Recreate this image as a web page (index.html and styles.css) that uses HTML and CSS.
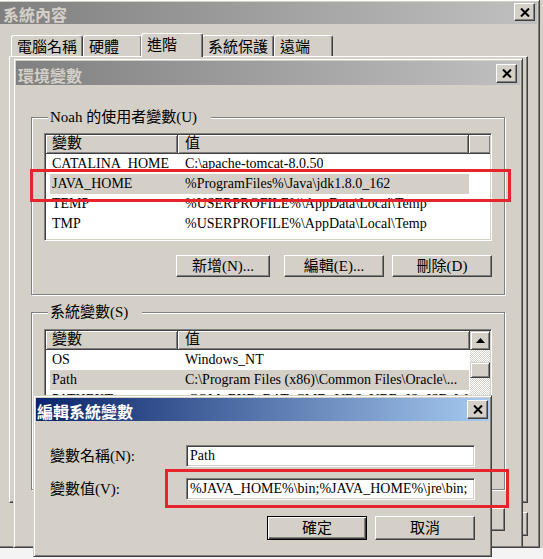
FILE: index.html
```html
<!DOCTYPE html>
<html lang="zh-Hant">
<head>
<meta charset="utf-8">
<title>環境變數</title>
<link rel="stylesheet" href="styles.css">
</head>
<body>
<div class="desktop">
  <div class="backwin"></div>

  <div class="win win-outer">
    <div class="titlebar inactive">
      <span class="title-text">系統內容</span>
      <span class="closebtn"><svg width="10" height="9" viewBox="0 0 10 9"><path d="M1 0.5 L9 8.5 M9 0.5 L1 8.5" stroke="#000" stroke-width="2"/></svg></span>
    </div>
    <div class="outer-body">
      <div class="tabs">
        <div class="tab">電腦名稱</div>
        <div class="tab">硬體</div>
        <div class="tab active">進階</div>
        <div class="tab">系統保護</div>
        <div class="tab">遠端</div>
      </div>
      <div class="tabpanel"></div>
      <div class="footer-buttons">
        <span class="btn w75"></span>
        <span class="btn w75"></span>
        <span class="btn w75"></span>
      </div>
    </div>
  </div>

  <div class="win win-env">
    <div class="titlebar tall inactive">
      <span class="title-text">環境變數</span>
      <span class="closebtn tallbtn"><svg width="10" height="9" viewBox="0 0 10 9"><path d="M1 0.5 L9 8.5 M9 0.5 L1 8.5" stroke="#000" stroke-width="2"/></svg></span>
    </div>
    <div class="env-body">
      <fieldset class="group">
        <legend>Noah 的使用者變數(U)</legend>
        <div class="listbox">
          <div class="lhead">
            <span class="hcell c1">變數</span>
            <span class="hcell c2">值</span>
            <span class="hcell c3"></span>
          </div>
          <div class="row"><span class="name">CATALINA_HOME</span><span class="val">C:\apache-tomcat-8.0.50</span></div>
          <div class="row sel"><span class="name">JAVA_HOME</span><span class="val">%ProgramFiles%\Java\jdk1.8.0_162</span></div>
          <div class="row"><span class="name">TEMP</span><span class="val">%USERPROFILE%\AppData\Local\Temp</span></div>
          <div class="row"><span class="name">TMP</span><span class="val">%USERPROFILE%\AppData\Local\Temp</span></div>
        </div>
        <div class="btnrow">
          <span class="btn b-new">新增(N)...</span>
          <span class="btn w100">編輯(E)...</span>
          <span class="btn w100">刪除(D)</span>
        </div>
      </fieldset>

      <fieldset class="group group2">
        <legend>系統變數(S)</legend>
        <div class="listbox withscroll">
          <div class="lcontent">
            <div class="lhead">
              <span class="hcell c1">變數</span>
              <span class="hcell c2 wide">值</span>
            </div>
            <div class="row"><span class="name">OS</span><span class="val">Windows_NT</span></div>
            <div class="row sel"><span class="name">Path</span><span class="val">C:\Program Files (x86)\Common Files\Oracle\...</span></div>
            <div class="row"><span class="name">PATHEXT</span><span class="val">.COM;.EXE;.BAT;.CMD;.VBS;.VBE;.JS;.JSE;.WSF;.WSH;.MSC</span></div>
          </div>
          <div class="vscroll">
            <span class="sbtn"><svg width="9" height="5" viewBox="0 0 9 5"><path d="M4.5 0 L9 5 L0 5Z" fill="#000"/></svg></span>
            <span class="thumb"></span>
          </div>
        </div>
        <div class="btnrow">
          <span class="btn b-new"></span>
          <span class="btn w100"></span>
          <span class="btn w100"></span>
        </div>
      </fieldset>

      <div class="env-buttons">
        <span class="btn w100"></span>
        <span class="btn w100"></span>
      </div>
    </div>
  </div>

  <div class="win win-edit">
    <div class="titlebar edit-title active-title">
      <span class="title-text">編輯系統變數</span>
      <span class="closebtn tallbtn"><svg width="10" height="9" viewBox="0 0 10 9"><path d="M1 0.5 L9 8.5 M9 0.5 L1 8.5" stroke="#000" stroke-width="2"/></svg></span>
    </div>
    <div class="edit-body">
      <div class="form">
        <span class="flabel">變數名稱(N):</span>
        <span class="input">Path</span>
        <span class="flabel">變數值(V):</span>
        <span class="input">%JAVA_HOME%\bin;%JAVA_HOME%\jre\bin;</span>
      </div>
      <div class="edit-buttons">
        <span class="btn default w100 h24">確定</span>
        <span class="btn w100 h24">取消</span>
      </div>
    </div>
  </div>

  <div class="mark mark-user"></div>
  <div class="mark mark-value"></div>
</div>
</body>
</html>
```

FILE: styles.css
```css
* { box-sizing: border-box; }

html, body {
  margin: 0;
  padding: 0;
}

body {
  width: 543px;
  height: 559px;
  overflow: hidden;
  background: #f4f4f4;
  font-family: "Liberation Serif", "Noto Sans CJK TC", serif;
  font-size: 15px;
  color: #000;
}

.desktop {
  position: relative;
  width: 543px;
  height: 559px;
  overflow: hidden;
}

.backwin {
  position: absolute;
  left: 539px;
  top: 0;
  width: 12px;
  height: 548px;
  background: #d4d0c8;
}

/* generic classic window */
.win {
  position: absolute;
  display: flex;
  flex-direction: column;
  background: #d4d0c8;
  border: 1px solid;
  border-color: #d4d0c8 #404040 #404040 #d4d0c8;
  box-shadow: inset 1px 1px #fff, inset -1px -1px #808080;
  padding: 2px;
}

.win-outer { left: -3px; top: -1px; width: 543px; height: 549px; }
.win-env { left: 13px; top: 58px; width: 510px; height: 490px; }
.win-edit { left: 33px; top: 395px; width: 459px; height: 162px; }

.titlebar {
  flex: none;
  height: 22px;
  display: flex;
  align-items: flex-start;
  justify-content: space-between;
  padding: 1px 2px 0 3px;
}

.titlebar.tall { height: 24px; padding: 3px 3px 0 2px; }
.titlebar.edit-title { height: 23px; padding: 2px 1px 0 1px; }

.inactive {
  background: linear-gradient(to right, #808080, #c0c0c0);
  color: #d4d0c8;
}

.active-title {
  background: linear-gradient(to right, #0a246a, #a6caf0);
  color: #fff;
}

.title-text {
  align-self: center;
  font-family: "Noto Sans CJK TC", sans-serif;
  font-weight: bold;
  font-size: 16px;
  line-height: 20px;
  white-space: nowrap;
}

.closebtn {
  width: 21px;
  height: 18px;
  display: flex;
  align-items: center;
  justify-content: center;
  background: #d4d0c8;
  border: 1px solid;
  border-color: #fff #404040 #404040 #fff;
  box-shadow: inset -1px -1px #808080;
}

.closebtn.tallbtn { height: 19px; }

/* outer window */
.outer-body {
  flex: 1;
  display: flex;
  flex-direction: column;
  padding: 9px 9px 0;
}

.tabs {
  height: 23px;
  display: flex;
  align-items: flex-end;
  padding-left: 2px;
}

.tab {
  position: relative;
  height: 21px;
  min-width: 59px;
  padding: 0 5px;
  border: 1px solid;
  border-bottom: none;
  border-color: #fff #404040 transparent #fff;
  border-radius: 3px 3px 0 0;
  box-shadow: inset -1px 0 #808080;
  font-family: "Noto Sans CJK TC", sans-serif;
  font-size: 15px;
  line-height: 20px;
  white-space: nowrap;
  background: #d4d0c8;
}

.tab.active {
  height: 24px;
  min-width: 62px;
  margin: 0 -1px -1px;
  z-index: 1;
}

.tabpanel {
  height: 447px;
  border: 1px solid;
  border-color: #fff #404040 #404040 #fff;
  box-shadow: inset -1px -1px #808080;
}

.footer-buttons {
  display: flex;
  justify-content: flex-end;
  gap: 6px;
  margin-top: 9px;
}

/* buttons */
.btn {
  height: 22px;
  display: flex;
  align-items: center;
  justify-content: center;
  background: #d4d0c8;
  border: 1px solid;
  border-color: #fff #404040 #404040 #fff;
  box-shadow: inset -1px -1px #808080;
  font-size: 15px;
  line-height: 20px;
  white-space: nowrap;
}

.btn.default {
  border-color: #000;
  box-shadow: inset 1px 1px #fff, inset -1px -1px #404040, inset -2px -2px #808080;
}

.w75 { width: 75px; height: 24px; }
.w100 { width: 100px; }
.h24 { height: 24px; }
.b-new { width: 94px; margin-right: 6px; }

/* env window body */
.env-body {
  flex: 1;
  display: flex;
  flex-direction: column;
  padding: 24px 15px 0;
}

.group {
  margin: 0;
  min-width: 0;
  padding: 7px 12px 17px;
  border: 1px solid #808080;
  box-shadow: inset 1px 1px #fff, 1px 1px #fff;
}

.group2 {
  margin-top: 9px;
  padding-top: 8px;
  padding-bottom: 16px;
}

.group legend {
  margin-left: 4px;
  padding: 0 14px 0 2px;
  background: #d4d0c8;
  font-size: 15px;
  line-height: 17px;
  white-space: nowrap;
}

.listbox {
  height: 108px;
  display: flex;
  flex-direction: column;
  overflow: hidden;
  background: #fff;
  border: 1px solid;
  border-color: #808080 #fff #fff #808080;
  box-shadow: inset 1px 1px #404040, inset -1px -1px #d4d0c8;
  padding: 1px;
}

.listbox.withscroll {
  display: grid;
  grid-template-columns: 1fr 20px;
}

.lcontent {
  overflow: hidden;
}

.lhead {
  display: flex;
  height: 19px;
  flex: none;
}

.hcell {
  height: 19px;
  background: #d4d0c8;
  border-right: 1px solid #404040;
  border-bottom: 1px solid #404040;
  box-shadow: inset 1px 1px #fff, inset -1px -1px #808080;
  font-size: 15px;
  line-height: 17px;
  white-space: nowrap;
}

.hcell.c1 { width: 132px; padding-left: 6px; }
.hcell.c2 { width: 291px; padding-left: 7px; }
.hcell.c2.wide { width: 292px; }
.hcell.c3 { flex: 1; border-right: none; }

.row {
  display: flex;
  height: 20px;
  width: 419px;
  margin-left: 4px;
  font-size: 14px;
  line-height: 20px;
  white-space: nowrap;
  overflow: hidden;
}

.row.sel { background: #d4d0c8; }

.row .name { width: 128px; flex: none; padding-left: 2px; overflow: hidden; }
.row .val { padding-left: 7px; overflow: hidden; }

.vscroll {
  display: flex;
  flex-direction: column;
  background-image: repeating-conic-gradient(#fff 0% 25%, #d4d0c8 0% 50%);
  background-size: 2px 2px;
}

.sbtn, .thumb {
  flex: none;
  background: #d4d0c8;
  border: 1px solid;
  border-color: #d4d0c8 #404040 #404040 #d4d0c8;
  box-shadow: inset 1px 1px #fff, inset -1px -1px #808080;
}

.sbtn {
  height: 19px;
  display: flex;
  align-items: center;
  justify-content: center;
}

.thumb {
  height: 16px;
  margin-top: 12px;
}

.btnrow {
  display: flex;
  justify-content: flex-end;
  gap: 8px;
  margin-top: 14px;
}

.env-buttons {
  display: flex;
  justify-content: flex-end;
  gap: 8px;
  margin-top: 18px;
}

.env-buttons .btn { height: 23px; }

/* edit dialog */
.edit-body {
  flex: 1;
  padding: 24px 14px 0;
  display: flex;
  flex-direction: column;
}

.form {
  display: grid;
  grid-template-columns: 136px 1fr;
  row-gap: 11px;
  align-items: center;
}

.flabel {
  font-size: 15px;
  line-height: 22px;
  white-space: nowrap;
}

.input {
  height: 22px;
  overflow: hidden;
  white-space: nowrap;
  background: #fff;
  border: 1px solid;
  border-color: #808080 #fff #fff #808080;
  box-shadow: inset 1px 1px #404040, inset -1px -1px #d4d0c8;
  padding: 1px 3px 0 3px;
  font-size: 14px;
  line-height: 18px;
}

.edit-buttons {
  display: flex;
  justify-content: flex-end;
  gap: 8px;
  margin-top: 16px;
}

/* annotation rectangles */
.mark {
  position: absolute;
  border: 3px solid #e6242b;
}

.mark-user { left: 30px; top: 169px; width: 481px; height: 33px; }
.mark-value { left: 165px; top: 469px; width: 344px; height: 39px; }
```
